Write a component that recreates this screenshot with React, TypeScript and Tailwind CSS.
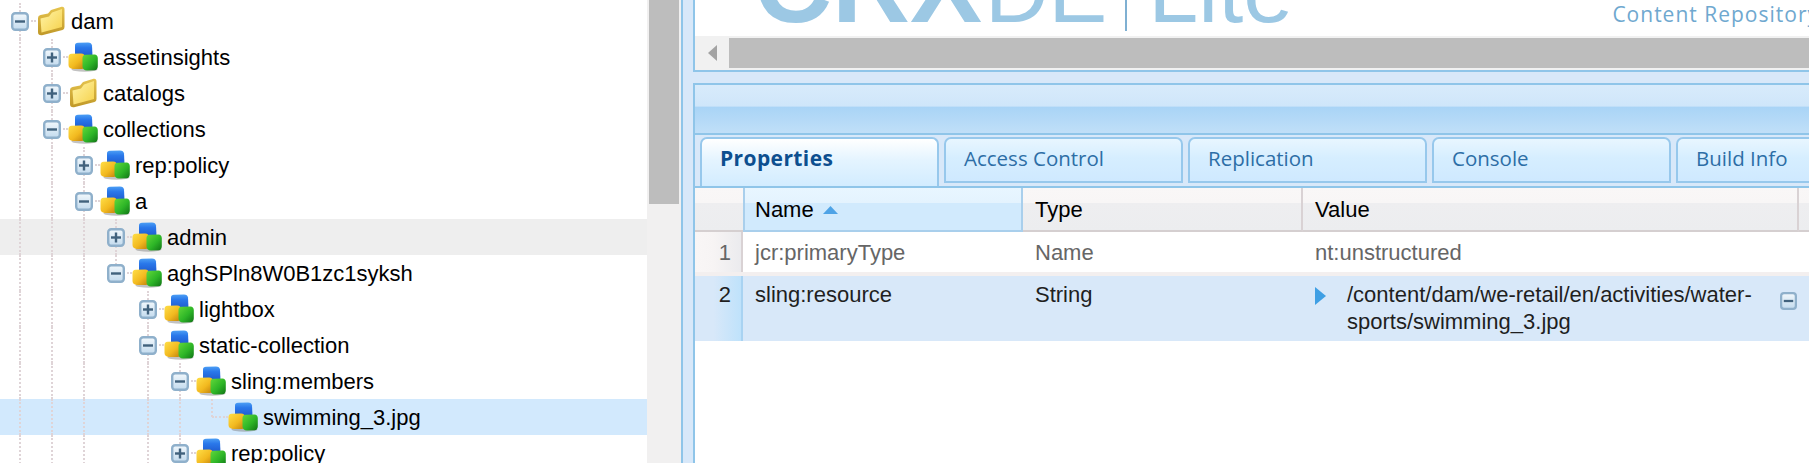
import React from 'react'

type Node = {
  label: string
  depth: number
  guides: number[]
  toggle?: 'plus' | 'minus'
  icon?: 'folder' | 'cube'
  last?: boolean
  bg?: string
}

const nodes: Node[] = [
  { label: 'dam', depth: 0, guides: [], toggle: 'minus', icon: 'folder' },
  { label: 'assetinsights', depth: 1, guides: [0], toggle: 'plus' },
  { label: 'catalogs', depth: 1, guides: [0], toggle: 'plus', icon: 'folder' },
  { label: 'collections', depth: 1, guides: [0], toggle: 'minus' },
  { label: 'rep:policy', depth: 2, guides: [0, 1], toggle: 'plus' },
  { label: 'a', depth: 2, guides: [0, 1], toggle: 'minus' },
  { label: 'admin', depth: 3, guides: [0, 1, 2], toggle: 'plus', bg: 'bg-[#eeeeee]' },
  { label: 'aghSPln8W0B1zc1syksh', depth: 3, guides: [0, 1, 2], toggle: 'minus', last: true },
  { label: 'lightbox', depth: 4, guides: [0, 1, 2], toggle: 'plus' },
  { label: 'static-collection', depth: 4, guides: [0, 1, 2], toggle: 'minus' },
  { label: 'sling:members', depth: 5, guides: [0, 1, 2, 4], toggle: 'minus' },
  { label: 'swimming_3.jpg', depth: 6, guides: [0, 1, 2, 4, 5], last: true, bg: 'bg-[#d2e9fd]' },
  { label: 'rep:policy', depth: 5, guides: [0, 1, 2, 4], toggle: 'plus' },
]

function Defs() {
  return (
    <svg width="0" height="0" className="absolute">
      <defs>
        <linearGradient id="blueFace" x1="0" y1="0" x2="0" y2="1">
          <stop offset="0" stopColor="#4c9ff5" />
          <stop offset="0.3" stopColor="#2a78ea" />
          <stop offset="1" stopColor="#1a4fc4" />
        </linearGradient>
        <linearGradient id="yellowFace" x1="0" y1="0" x2="1" y2="1">
          <stop offset="0" stopColor="#ffdf48" />
          <stop offset="0.55" stopColor="#f2b91f" />
          <stop offset="1" stopColor="#bd7d0c" />
        </linearGradient>
        <linearGradient id="greenFace" x1="0" y1="0" x2="1" y2="1">
          <stop offset="0" stopColor="#62d83a" />
          <stop offset="0.55" stopColor="#2db527" />
          <stop offset="1" stopColor="#117316" />
        </linearGradient>
        <linearGradient id="folderFace" x1="0" y1="0" x2="1" y2="1">
          <stop offset="0" stopColor="#fff4a8" />
          <stop offset="1" stopColor="#f6d24c" />
        </linearGradient>
        <linearGradient id="folderEdge" x1="0" y1="0" x2="0" y2="1">
          <stop offset="0" stopColor="#e6c44e" />
          <stop offset="1" stopColor="#c09828" />
        </linearGradient>
        <linearGradient id="toggleFace" x1="0" y1="0" x2="0" y2="1">
          <stop offset="0" stopColor="#f2f8fc" />
          <stop offset="1" stopColor="#c3dbee" />
        </linearGradient>
      </defs>
    </svg>
  )
}

function Cube() {
  return (
    <svg width="30" height="30" viewBox="0 0 30 30" className="shrink-0">
      <ellipse cx="16.5" cy="27.2" rx="13" ry="2.6" fill="#777777" opacity="0.45" />
      <path d="M7 3.5 Q7 1 10 0.8 L20 0.5 Q23.5 0.5 24 3.5 L24.5 14 Q24.5 17 21 17.5 L10 17.5 Q7 17 7 14 Z" fill="url(#blueFace)" />
      <path d="M0.5 15 Q0.5 12 3.5 11.8 L13 11.5 Q17 11.5 17 15 L17.5 23 Q17.5 27 13.5 27 L5 27 Q0.5 26.5 0.5 23 Z" fill="url(#yellowFace)" />
      <path d="M14.5 16 Q14.5 13 17.5 12.8 L26.5 12.5 Q29.5 12.8 29.8 16 L29.8 24 Q29.8 28 26.5 28.3 L19 28.6 Q14.5 28.3 14.5 24 Z" fill="url(#greenFace)" />
    </svg>
  )
}

function Folder() {
  return (
    <svg width="29" height="30" viewBox="0 0 29 30" className="ml-[1px] shrink-0">
      <path d="M1 12 Q1 9.5 3.5 9 L11 7.5 L14 4 L24.5 0.8 Q27.5 0.3 27.5 3.5 L27.5 21 Q27.5 23.3 25.5 24 L6 29 Q1 30 1 26 Z" fill="url(#folderEdge)" />
      <path d="M3.5 12.5 L12 10.5 L15 6.5 L25 3 L25 21 L4.5 26.5 Z" fill="url(#folderFace)" />
    </svg>
  )
}

function Toggle({ kind, size = 18 }: { kind: 'plus' | 'minus'; size?: number }) {
  return (
    <svg width={size} height={size + 1} viewBox="0 0 18 19" className="relative shrink-0">
      <rect x="1.2" y="1.2" width="15.6" height="16.6" rx="3" fill="url(#toggleFace)" stroke="#8fb0cb" strokeWidth="2.4" />
      <rect x="4" y="8.3" width="10" height="2.4" fill="#41627d" />
      {kind === 'plus' && <rect x="7.8" y="4.5" width="2.4" height="10" fill="#41627d" />}
    </svg>
  )
}

const dotted = 'border-dotted border-[#dfd4d7]'

function TreeRow({ node }: { node: Node }) {
  const columns = Array.from({ length: node.depth }, (_, i) => i)
  return (
    <div className={`flex h-9 items-center pl-1 ${node.bg ?? ''}`}>
      {columns.map((i) => (
        <div key={i} className="flex h-full w-8 shrink-0 justify-center">
          {node.guides.includes(i) && <div className={`h-full border-l-2 ${dotted}`} />}
        </div>
      ))}
      <div className="relative flex h-full w-8 shrink-0 items-center justify-center">
        <div className={`absolute left-[15px] top-0 border-l-2 ${dotted} ${node.last ? 'h-[18px]' : 'h-full'}`} />
        <div className={`absolute left-[16px] top-[17px] w-4 border-t-2 ${dotted}`} />
        {node.toggle && <Toggle kind={node.toggle} />}
      </div>
      <div className="relative flex w-[35px] shrink-0 items-center">
        {node.icon === 'folder' ? <Folder /> : <Cube />}
      </div>
      <span className="whitespace-nowrap text-[22px] text-black">{node.label}</span>
    </div>
  )
}

function HeaderCell({ label, width, sorted }: { label: string; width: string; sorted?: boolean }) {
  return (
    <div
      className={`flex h-full shrink-0 items-center text-[22px] text-black ${width} ${
        sorted
          ? 'border-x-2 border-b-2 border-[#a9cfec] bg-[linear-gradient(#e8f6ff_0%,#e4f3fe_35%,#d1eafd_36%,#d1eafd_100%)] pl-[10px]'
          : 'border-r-2 border-b-2 border-r-[#d9d2d4] border-b-[#d5cfd0] bg-[linear-gradient(#f9f7f7_0%,#f8f6f6_35%,#eeeef0_36%,#ecedef_100%)] pl-[12px]'
      }`}
    >
      {label}
      {sorted && (
        <svg width="15" height="8" viewBox="0 0 15 8" className="mt-[2px] ml-[9px]">
          <path d="M7.5 0 L15 8 L0 8 Z" fill="#4ea3e6" />
        </svg>
      )}
    </div>
  )
}

function Tab({ label, active }: { label: string; active?: boolean }) {
  return (
    <div
      className={`flex w-[239px] shrink-0 items-center rounded-t-[7px] border-x-2 border-t-2 border-[#97c8ec] pl-[18px] leading-none [font-family:'Open_Sans',sans-serif] ${
        active
          ? 'h-[49px] bg-[linear-gradient(#ffffff_0%,#e4f4ff_45%,#d2ecff_100%)] pb-[8px] text-[21px] font-bold tracking-[0.4px] text-[#0d4f8f]'
          : 'mb-[3px] h-[46px] border-b-2 bg-[linear-gradient(#e8f6ff_0%,#d6eeff_45%,#cfe9ff_100%)] pb-[3px] text-[20.5px] text-[#2d6ea6]'
      }`}
    >
      {label}
    </div>
  )
}

export default function App() {
  return (
    <div className="flex h-[463px] w-[1809px] overflow-hidden bg-white [font-family:'Liberation_Sans',Arial,sans-serif]">
      <Defs />
      <div className="w-[647px] shrink-0 overflow-hidden pt-[3px]">
        {nodes.map((node, i) => (
          <TreeRow key={i} node={node} />
        ))}
      </div>
      <div className="w-[34px] shrink-0 bg-[#f1f0f0] px-[2px]">
        <div className="h-[204px] bg-[#bdbdbd]" />
      </div>

      <div className="flex min-w-0 flex-1 flex-col border-l-2 border-[#8fc5e9] bg-[#d8e8f9] pl-[10px]">
        <div className="h-[72px] shrink-0 border-b-2 border-l-2 border-[#8fc5e9] bg-white">
          <div className="flex h-9 items-start overflow-hidden">
            <div className="-mt-[60px] flex items-baseline pl-[59px] text-[#9cc8e4]">
              <span className="text-[108px] leading-[90px] font-bold">CRX</span>
              <span className="ml-[3px] text-[88px] leading-[90px]">DE</span>
              <span className="ml-[18px] h-[60px] w-[2px] translate-y-[9px] bg-[#7fb0d2]" />
              <span className="ml-[21px] text-[90px] leading-[90px]">Lite</span>
            </div>
            <span className="-mt-[1px] -mr-[10px] ml-auto text-[21px] font-medium tracking-[1px] whitespace-nowrap text-[#6fa8cf] [font-family:'Open_Sans',sans-serif]">
              Content Repository
            </span>
          </div>
          <div className="flex h-[34px] bg-[#f1f1f1]">
            <div className="flex w-[34px] shrink-0 items-center justify-center">
              <svg width="9" height="16" viewBox="0 0 9 16">
                <path d="M9 0 L9 16 L0 8 Z" fill="#a3a3a3" />
              </svg>
            </div>
            <div className="my-[2px] flex-1 bg-[#bdbdbd]" />
          </div>
        </div>

        <div className="h-[11px] shrink-0" />

        <div className="flex min-h-0 flex-1 flex-col border-t-2 border-l-2 border-[#8fc5e9] bg-white">
          <div className="h-[50px] shrink-0 border-b-2 border-[#8fc5e9] bg-[linear-gradient(#d8ebfb_0%,#cfe6fa_44%,#a9d4f6_46%,#c0dff8_100%)]" />
          <div className="flex h-[53px] shrink-0 items-end gap-[5px] overflow-hidden border-b-2 border-[#8fc5e9] bg-[#d8e8f9] pl-[5px]">
            <Tab label="Properties" active />
            <Tab label="Access Control" />
            <Tab label="Replication" />
            <Tab label="Console" />
            <Tab label="Build Info" />
          </div>
          <div className="flex h-[44px] shrink-0">
            <div className="h-full w-[48px] shrink-0 border-b-2 border-[#d5cfd0] bg-[linear-gradient(#f9f7f7_0%,#f8f6f6_35%,#eeeef0_36%,#ecedef_100%)]" />
            <HeaderCell label="Name" width="w-[280px]" sorted />
            <HeaderCell label="Type" width="w-[280px]" />
            <HeaderCell label="Value" width="w-[496px]" />
            <div className="h-full flex-1 border-b-2 border-[#d5cfd0] bg-[linear-gradient(#f9f7f7_0%,#f8f6f6_35%,#eeeef0_36%,#ecedef_100%)]" />
          </div>
          <div className="flex h-[44px] shrink-0 border-b-4 border-[#f3efef] text-[22px] text-[#666666]">
            <div className="flex h-full w-[48px] shrink-0 items-center justify-end border-r-2 border-[#d9d2d4] bg-[linear-gradient(90deg,#f9f6f6_0%,#f7f4f4_40%,#ebebee_100%)] pr-[10px]">
              1
            </div>
            <div className="flex w-[280px] shrink-0 items-center pl-[12px]">jcr:primaryType</div>
            <div className="flex w-[280px] shrink-0 items-center pl-[12px]">Name</div>
            <div className="flex flex-1 items-center pl-[12px]">nt:unstructured</div>
          </div>
          <div className="flex h-[65px] shrink-0 bg-[#d8e8f9] text-[22px] leading-[27px] text-[#1f1f1f]">
            <div className="h-full w-[48px] shrink-0 border-r-2 border-[#a9d3f2] bg-[linear-gradient(90deg,#d8e8f9_0%,#d8e8f9_40%,#bfe2fb_100%)] pt-[5px] pr-[10px] text-right">
              2
            </div>
            <div className="w-[280px] shrink-0 pt-[5px] pl-[12px]">sling:resource</div>
            <div className="w-[280px] shrink-0 pt-[5px] pl-[12px]">String</div>
            <div className="flex w-[496px] shrink-0 pt-[5px] pl-[12px]">
              <svg width="11" height="18" viewBox="0 0 11 18" className="mt-[6px] shrink-0">
                <path d="M0 0 L11 9 L0 18 Z" fill="#3f9fe4" />
              </svg>
              <div className="ml-[21px] w-[410px] shrink-0">/content/dam/we-retail/en/activities/water-sports/swimming_3.jpg</div>
              <div className="mt-[11px] ml-[23px] shrink-0">
                <Toggle kind="minus" size={17} />
              </div>
            </div>
          </div>
        </div>
      </div>
    </div>
  )
}
